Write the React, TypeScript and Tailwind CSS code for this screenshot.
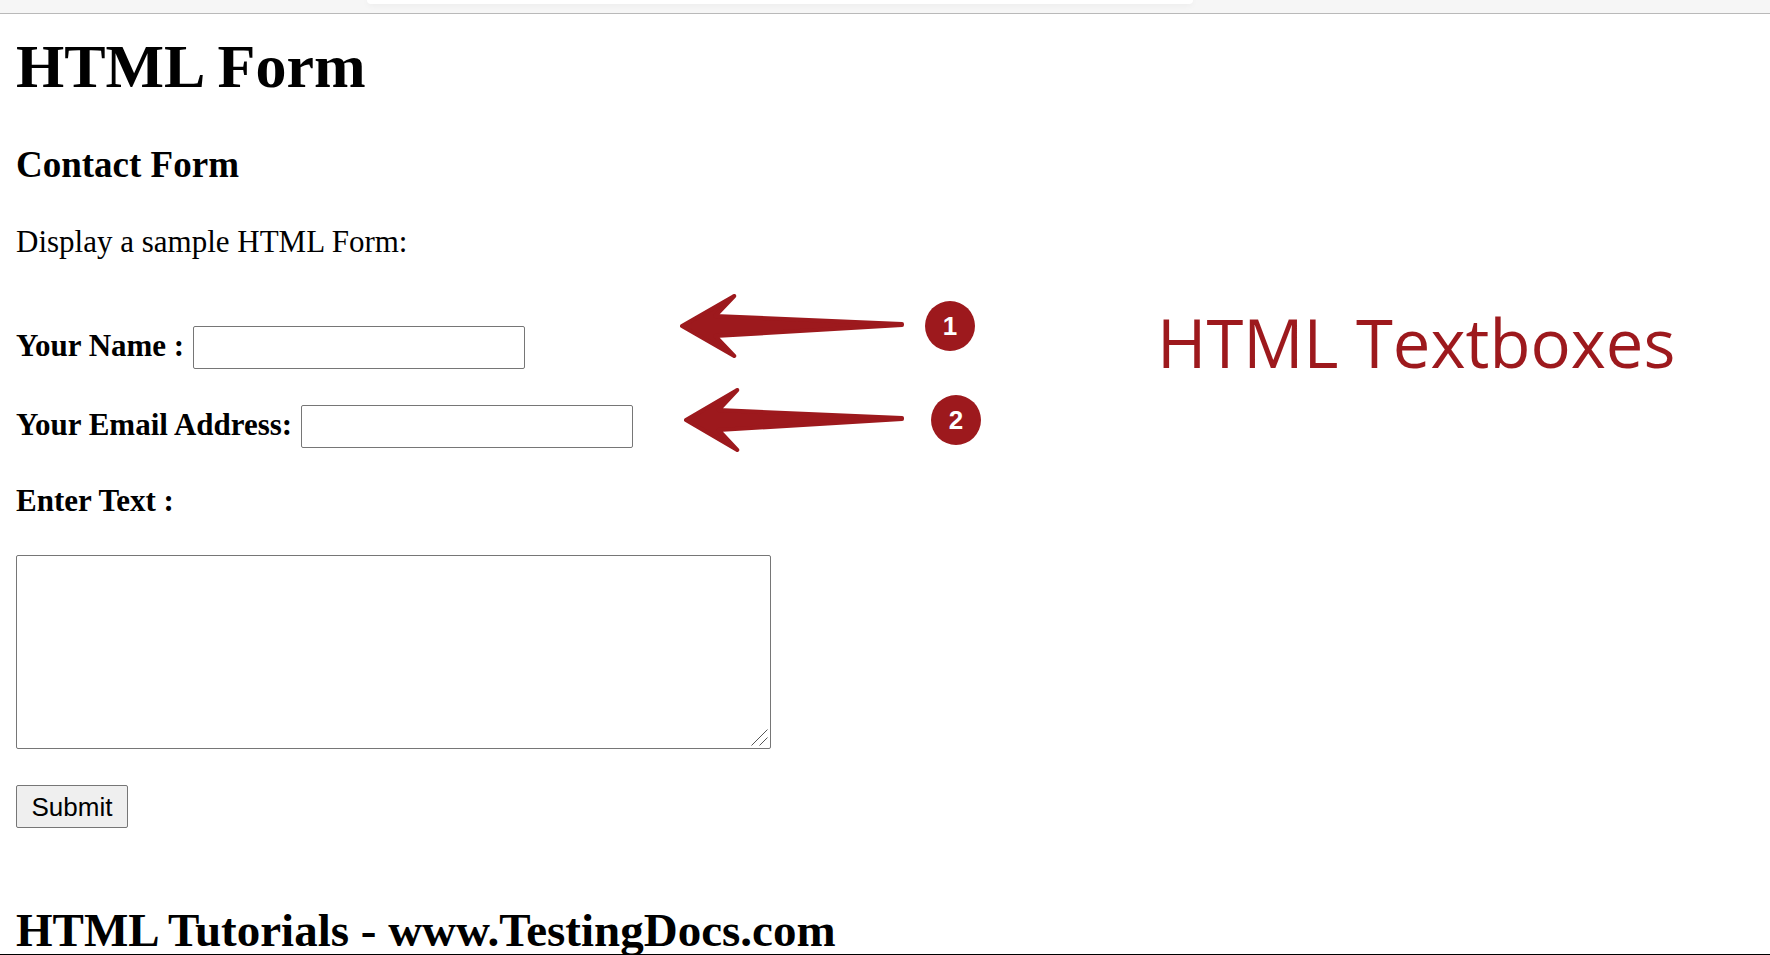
import { useState } from 'react';

type Contact = {
  name: string;
  email: string;
  text: string;
};

function Arrow({ className }: { className: string }) {
  return (
    <svg viewBox="0 0 224 64" preserveAspectRatio="none" className={className} aria-hidden="true">
      <path
        d="M2 32 L54 2 L35 22 L221 30 L221 31 L35 42 L54 62 Z"
        fill="#9d191d"
        stroke="#9d191d"
        strokeWidth="4"
        strokeLinejoin="round"
      />
    </svg>
  );
}

function Badge({ children }: { children: string }) {
  return (
    <span className="flex size-[50px] shrink-0 items-center justify-center rounded-full bg-[#9d191d] font-['Liberation_Sans',Arial,sans-serif] text-[26px] leading-none font-bold text-white">
      {children}
    </span>
  );
}

export default function App() {
  const [contact, setContact] = useState<Contact>({ name: '', email: '', text: '' });

  const handleChange = (e: React.ChangeEvent<HTMLInputElement | HTMLTextAreaElement>) => {
    const { name, value } = e.target;
    setContact(prev => ({ ...prev, [name]: value }));
  };

  const handleSubmit = (e: React.FormEvent) => {
    e.preventDefault();
  };

  return (
    <div className="flex h-screen flex-col overflow-hidden border-b border-black bg-white font-['Liberation_Serif','Times_New_Roman',serif] text-[31px] leading-9 text-black">
      <header className="flex h-3.5 shrink-0 items-start border-b border-[#b9b9b9] bg-[#f6f6f6] pr-[577px] pl-[367px]">
        <div className="h-1 flex-1 rounded-b-md bg-white shadow-[0_1px_6px_rgba(0,0,0,0.06)]" />
      </header>

      <main className="px-4 pt-4">
        <h1 className="text-[62px] leading-[72px] font-bold">HTML Form</h1>
        <h3 className="mt-10 text-[37px] leading-[46px] font-bold">Contact Form</h3>
        <p className="mt-9">Display a sample HTML Form:</p>

        <form onSubmit={handleSubmit}>
          <div className="mt-[34px] flex items-start">
            <div className="flex w-[664px] shrink-0 flex-col gap-9 pt-8">
              <div className="flex items-center gap-[9px]">
                <label htmlFor="name" className="pb-1 font-bold">Your Name :</label>
                <input
                  type="text"
                  id="name"
                  name="name"
                  value={contact.name}
                  onChange={handleChange}
                  className="h-[43px] w-[332px] rounded-xs border border-[#767676] bg-white px-1 font-['Liberation_Sans',Arial,sans-serif] text-[26px]"
                />
              </div>
              <div className="flex items-center gap-[9px]">
                <label htmlFor="email" className="pb-1 font-bold">Your Email Address:</label>
                <input
                  type="text"
                  id="email"
                  name="email"
                  value={contact.email}
                  onChange={handleChange}
                  className="h-[43px] w-[332px] rounded-xs border border-[#767676] bg-white px-1 font-['Liberation_Sans',Arial,sans-serif] text-[26px]"
                />
              </div>
            </div>

            <div className="flex shrink-0 flex-col gap-[30px]">
              <div className="flex items-center gap-5">
                <Arrow className="h-16 w-[225px]" />
                <Badge>1</Badge>
              </div>
              <div className="flex items-center gap-[26px] pl-1">
                <Arrow className="h-16 w-[221px]" />
                <Badge>2</Badge>
              </div>
            </div>

            <h2 className="ml-[176px] font-['Open_Sans','Segoe_UI',sans-serif] text-[67px] leading-[96px] whitespace-nowrap text-[#9d191d]">
              HTML Textboxes
            </h2>
          </div>

          <label htmlFor="text" className="mt-[31px] block w-fit font-bold">Enter Text :</label>
          <div className="relative mt-9 w-[755px]">
            <textarea
              id="text"
              name="text"
              value={contact.text}
              onChange={handleChange}
              className="block h-[194px] w-full resize-none rounded-xs border border-[#767676] bg-white p-1 font-['Liberation_Mono',monospace] text-[26px]"
            />
            <svg
              viewBox="0 0 18 18"
              className="pointer-events-none absolute right-0.5 bottom-0.5 size-[18px]"
              fill="none"
              stroke="#555"
              aria-hidden="true"
            >
              <path d="M.5 16.5 L16.5 .5 M8.5 16.5 L16.5 8.5" />
            </svg>
          </div>
          <button
            type="submit"
            className="mt-9 block h-[43px] w-28 rounded-xs border border-[#767676] bg-[#efefef] font-['Liberation_Sans',Arial,sans-serif] text-[26px]"
          >
            Submit
          </button>
        </form>

        <h2 className="mt-[76px] text-[47px] leading-[52px] font-bold">HTML Tutorials - www.TestingDocs.com</h2>
      </main>
    </div>
  );
}
